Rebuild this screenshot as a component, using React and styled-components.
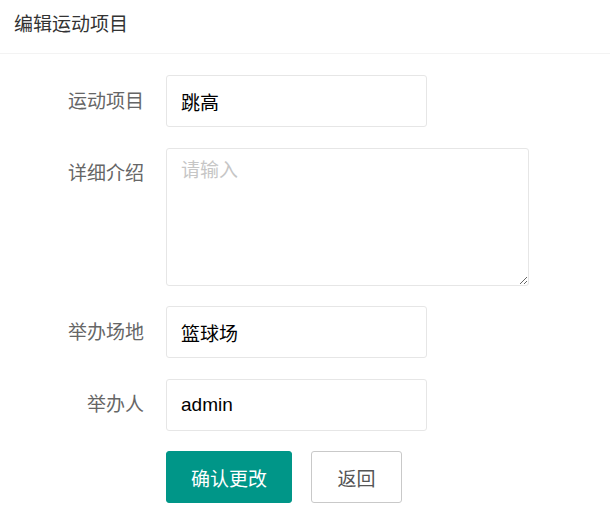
import styled, { createGlobalStyle } from 'styled-components'

const GlobalStyle = createGlobalStyle`
    * {
        box-sizing: border-box;
    }
    body {
        margin: 0;
        background: #fff;
        font-family: "Liberation Sans", "Noto Sans CJK SC", sans-serif;
        color: #333;
    }
`

const fields = [
    { label: '运动项目', value: '跳高' },
    { label: '详细介绍', multiline: true, placeholder: '请输入' },
    { label: '举办场地', value: '篮球场' },
    { label: '举办人', value: 'admin' },
]

export default function App() {
    return (
        <Card>
            <GlobalStyle />
            <CardHeader>编辑运动项目</CardHeader>
            <Form onSubmit={e => e.preventDefault()}>
                {fields.map((item, index) => (
                    <FormRow key={index} $top={item.multiline}>
                        <Label $top={item.multiline}>{item.label}</Label>
                        {item.multiline
                            ? <TextArea placeholder={item.placeholder} />
                            : <Input defaultValue={item.value} />}
                    </FormRow>
                ))}
                <FormRow>
                    <Label />
                    <Buttons>
                        <Button type='submit' $primary>确认更改</Button>
                        <Button type='button'>返回</Button>
                    </Buttons>
                </FormRow>
            </Form>
        </Card>
    )
}

const Card = styled.div`
    width: 610px;
    min-height: 516px;
    background: #fff;
`

const CardHeader = styled.div`
    height: 54px;
    padding: 0 14px 8px;
    display: flex;
    align-items: center;
    font-size: 19px;
    color: #333;
    border-bottom: 1px solid #f3f3f3;
`

const Form = styled.form`
    display: flex;
    flex-direction: column;
    gap: 20.5px;
    padding-top: 21px;
`

const FormRow = styled.div`
    display: flex;
    align-items: ${props => props.$top ? 'flex-start' : 'center'};
`

const Label = styled.label`
    width: 166px;
    flex-shrink: 0;
    padding-right: 22px;
    padding-top: ${props => props.$top ? '12px' : '0'};
    text-align: right;
    font-size: 19px;
    line-height: 27px;
    color: #666;
`

const Input = styled.input`
    width: 261px;
    height: 52px;
    padding: 0 14px;
    border: 1px solid #e6e6e6;
    border-radius: 3px;
    font: inherit;
    font-size: 19px;
    color: #000;
    outline: none;
`

const TextArea = styled.textarea`
    width: 363px;
    height: 138px;
    padding: 8px 14px;
    border: 1px solid #e6e6e6;
    border-radius: 3px;
    font: inherit;
    font-size: 19px;
    line-height: 27px;
    color: #000;
    outline: none;

    &::placeholder {
        color: #c6c6c6;
    }
`

const Buttons = styled.div`
    display: flex;
    gap: 19px;
`

const Button = styled.button`
    height: 52px;
    padding: ${props => props.$primary ? '0 24px' : '0 25.5px'};
    border-radius: 3px;
    font: inherit;
    font-size: 19px;
    cursor: pointer;
    background: ${props => props.$primary ? '#009688' : '#fff'};
    color: ${props => props.$primary ? '#fff' : '#555'};
    border: 1px solid ${props => props.$primary ? '#009688' : '#c9c9c9'};
`
